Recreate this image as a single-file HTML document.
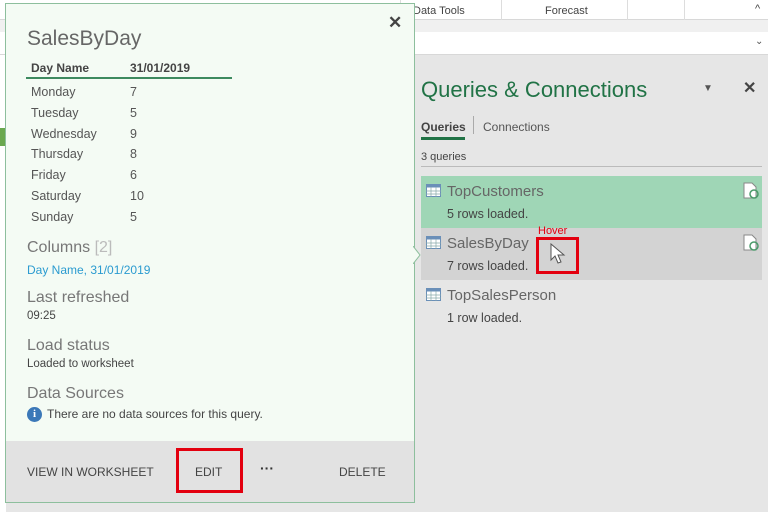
<!DOCTYPE html>
<html><head><style>
*{margin:0;padding:0;box-sizing:border-box}
body{width:768px;height:512px;overflow:hidden;position:relative;background:#e6e6e6;font-family:"Liberation Sans",sans-serif;color:#444}
.a{position:absolute;white-space:nowrap}
</style></head><body>
<div class="a" style="left:0;top:0;width:768px;height:20px;background:#fff;border-bottom:1px solid #d8d8d8"></div>
<div class="a" style="left:400px;top:0;width:1px;height:20px;background:#ddd"></div>
<div class="a" style="left:501px;top:0;width:1px;height:20px;background:#ddd"></div>
<div class="a" style="left:627px;top:0;width:1px;height:20px;background:#ddd"></div>
<div class="a" style="left:684px;top:0;width:1px;height:20px;background:#ddd"></div>
<div class="a" style="left:413px;top:5px;font-size:11px;color:#444">Data Tools</div>
<div class="a" style="left:545px;top:5px;font-size:11px;color:#444">Forecast</div>
<div class="a" style="left:755px;top:3px;font-size:11px;color:#444">^</div>
<div class="a" style="left:0;top:20px;width:768px;height:12px;background:#f0f0f0"></div>
<div class="a" style="left:0;top:32px;width:768px;height:23px;background:#fff;border-bottom:1px solid #d8d8d8"></div>
<div class="a" style="left:755px;top:36px;font-size:10px;color:#555">&#8964;</div>
<div class="a" style="left:0;top:55px;width:6px;height:457px;background:#fff"></div>
<div class="a" style="left:0;top:128px;width:5px;height:18px;background:#6aa84f"></div>
<div class="a" style="left:5px;top:3px;width:410px;height:500px;background:#f4fbf4;border:1px solid #8dbf9d"></div>
<div class="a" style="left:6px;top:441px;width:408px;height:61px;background:#e2e2e2"></div>
<svg class="a" style="left:413px;top:246px" width="8" height="18"><path d="M0 0L7 9L0 18" fill="#f4fbf4" stroke="#8dbf9d"/></svg>
<div class="a" style="left:388px;top:13px;font-size:17px;color:#444;font-weight:bold">✕</div>
<div class="a" style="left:27px;top:27px;font-size:21px;color:#666">SalesByDay</div>
<div class="a" style="left:31px;top:61px;font-size:12px;font-weight:bold;color:#444">Day Name</div>
<div class="a" style="left:130px;top:61px;font-size:12px;font-weight:bold;color:#444">31/01/2019</div>
<div class="a" style="left:26px;top:77px;width:206px;height:2px;background:#3d8a5f"></div>
<div class="a" style="left:31px;top:82px;font-size:12.5px;line-height:20.8px;color:#555">Monday<br>Tuesday<br>Wednesday<br>Thursday<br>Friday<br>Saturday<br>Sunday</div>
<div class="a" style="left:130px;top:82px;font-size:12.5px;line-height:20.8px;color:#555">7<br>5<br>9<br>8<br>6<br>10<br>5</div>
<div class="a" style="left:27px;top:239px;font-size:16px;color:#777">Columns <span style="color:#bbb">[2]</span></div>
<div class="a" style="left:27px;top:263px;font-size:12px;color:#2b9bd0">Day Name, 31/01/2019</div>
<div class="a" style="left:27px;top:289px;font-size:16px;color:#777">Last refreshed</div>
<div class="a" style="left:27px;top:310px;font-size:11.5px;color:#444">09:25</div>
<div class="a" style="left:27px;top:337px;font-size:16px;color:#777">Load status</div>
<div class="a" style="left:27px;top:358px;font-size:11.5px;color:#444">Loaded to worksheet</div>
<div class="a" style="left:27px;top:385px;font-size:16px;color:#777">Data Sources</div>
<div class="a" style="left:27px;top:407px;width:15px;height:15px;border-radius:50%;background:#3b78b8;color:#fff;font-size:11px;font-weight:bold;text-align:center;line-height:15px;font-family:'Liberation Serif',serif">i</div>
<div class="a" style="left:47px;top:407px;font-size:12px;color:#444">There are no data sources for this query.</div>
<div class="a" style="left:27px;top:465px;font-size:12px;color:#444">VIEW IN WORKSHEET</div>
<div class="a" style="left:195px;top:465px;font-size:12px;color:#444">EDIT</div>
<div class="a" style="left:176px;top:448px;width:67px;height:45px;border:3px solid #e3000f"></div>
<div class="a" style="left:260px;top:460px;font-size:14px;color:#333;font-weight:bold;letter-spacing:0px">···</div>
<div class="a" style="left:339px;top:465px;font-size:12px;color:#444">DELETE</div>
<div class="a" style="left:421px;top:77px;font-size:22px;color:#217346">Queries &amp; Connections</div>
<div class="a" style="left:703px;top:83px;font-size:10px;color:#555">▼</div>
<div class="a" style="left:743px;top:78px;font-size:16px;color:#444;font-weight:bold">✕</div>
<div class="a" style="left:421px;top:120px;font-size:12px;font-weight:bold;color:#444">Queries</div>
<div class="a" style="left:421px;top:137px;width:44px;height:3px;background:#217346"></div>
<div class="a" style="left:473px;top:116px;width:1px;height:18px;background:#aaa"></div>
<div class="a" style="left:483px;top:120px;font-size:12px;color:#555">Connections</div>
<div class="a" style="left:421px;top:151px;font-size:11px;color:#444">3 queries</div>
<div class="a" style="left:421px;top:166px;width:341px;height:1px;background:#bbb"></div>
<div class="a" style="left:421px;top:176px;width:341px;height:52px;background:#9fd6b6"></div>
<div class="a" style="left:421px;top:228px;width:341px;height:52px;background:#d3d3d3"></div>
<svg class="a" style="left:426px;top:184px" width="15" height="13"><rect x=".5" y=".5" width="14" height="12" fill="#fff" stroke="#6a8fb8"/><rect x=".5" y=".5" width="14" height="3" fill="#6a8fb8"/><path d="M5 3v10M10 3v10M0 7h15M0 10h15" stroke="#8aa" stroke-width=".7"/></svg>
<svg class="a" style="left:426px;top:236px" width="15" height="13"><rect x=".5" y=".5" width="14" height="12" fill="#fff" stroke="#6a8fb8"/><rect x=".5" y=".5" width="14" height="3" fill="#6a8fb8"/><path d="M5 3v10M10 3v10M0 7h15M0 10h15" stroke="#8aa" stroke-width=".7"/></svg>
<svg class="a" style="left:426px;top:288px" width="15" height="13"><rect x=".5" y=".5" width="14" height="12" fill="#fff" stroke="#6a8fb8"/><rect x=".5" y=".5" width="14" height="3" fill="#6a8fb8"/><path d="M5 3v10M10 3v10M0 7h15M0 10h15" stroke="#8aa" stroke-width=".7"/></svg>
<div class="a" style="left:447px;top:183px;font-size:15px;color:#666">TopCustomers</div>
<div class="a" style="left:447px;top:207px;font-size:12.5px;color:#444">5 rows loaded.</div>
<div class="a" style="left:447px;top:235px;font-size:15px;color:#666">SalesByDay</div>
<div class="a" style="left:447px;top:259px;font-size:12.5px;color:#444">7 rows loaded.</div>
<div class="a" style="left:447px;top:287px;font-size:15px;color:#666">TopSalesPerson</div>
<div class="a" style="left:447px;top:311px;font-size:12.5px;color:#444">1 row loaded.</div>
<svg class="a" style="left:743px;top:182px" width="16" height="17"><path d="M1 1h8l4 4v11H1z" fill="#fff" stroke="#888"/><circle cx="11" cy="12" r="4" fill="none" stroke="#4a9a6a" stroke-width="1.5"/></svg>
<svg class="a" style="left:743px;top:234px" width="16" height="17"><path d="M1 1h8l4 4v11H1z" fill="#fff" stroke="#888"/><circle cx="11" cy="12" r="4" fill="none" stroke="#4a9a6a" stroke-width="1.5"/></svg>
<div class="a" style="left:538px;top:225px;font-size:11px;color:#e3000f">Hover</div>
<div class="a" style="left:536px;top:237px;width:43px;height:37px;border:3px solid #e3000f"></div>
<svg class="a" style="left:550px;top:243px" width="16" height="22"><path d="M1 1v16l4-4 3 7 3-1-3-7h6z" fill="#fff" stroke="#555"/></svg>
</body></html>
